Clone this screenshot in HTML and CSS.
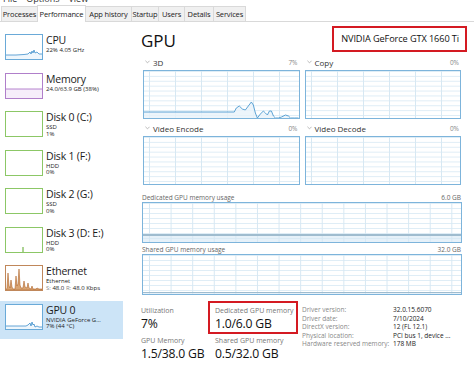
FILE: index.html
```html
<!DOCTYPE html>
<html>
<head>
<meta charset="utf-8">
<link rel="stylesheet" href="styles.css">
</head>
<body>
<div class="menubar"><span>File</span><span>Options</span><span>View</span></div>
<div class="tabs">
  <div class="tab">Processes</div>
  <div class="tab active">Performance</div>
  <div class="tab">App history</div>
  <div class="tab">Startup</div>
  <div class="tab">Users</div>
  <div class="tab">Details</div>
  <div class="tab">Services</div>
</div>
<div class="app">
  <aside class="sidebar">
    <div class="item">
      <div class="thumb t-cpu"><svg viewBox="0 0 36 24" preserveAspectRatio="none"><polygon class="fill" points="0,20 10,20 18,19.5 22,19 24,17 25,19 26,16 27,18 28,15 29,18 31,17 33,19 36,19 36,24 0,24"/><polyline points="0,20 10,20 18,19.5 22,19 24,17 25,19 26,16 27,18 28,15 29,18 31,17 33,19 36,19"/></svg></div>
      <div class="info"><div class="name">CPU</div><div class="sub">22% 4.05 GHz</div></div>
    </div>
    <div class="item">
      <div class="thumb t-mem"><svg viewBox="0 0 36 24" preserveAspectRatio="none"><rect class="fill" x="0" y="15" width="36" height="9"/><line x1="0" y1="15" x2="36" y2="15"/></svg></div>
      <div class="info"><div class="name">Memory</div><div class="sub">24.0/63.9 GB (38%)</div></div>
    </div>
    <div class="item">
      <div class="thumb t-disk"></div>
      <div class="info"><div class="name">Disk 0 (C:)</div><div class="sub">SSD</div><div class="sub">1%</div></div>
    </div>
    <div class="item">
      <div class="thumb t-disk"></div>
      <div class="info"><div class="name">Disk 1 (F:)</div><div class="sub">HDD</div><div class="sub">0%</div></div>
    </div>
    <div class="item">
      <div class="thumb t-disk"></div>
      <div class="info"><div class="name">Disk 2 (G:)</div><div class="sub">SSD</div><div class="sub">0%</div></div>
    </div>
    <div class="item">
      <div class="thumb t-disk"><svg viewBox="0 0 36 24" preserveAspectRatio="none"><line x1="17" y1="24" x2="17" y2="19"/></svg></div>
      <div class="info"><div class="name">Disk 3 (D: E:)</div><div class="sub">HDD</div><div class="sub">0%</div></div>
    </div>
    <div class="item">
      <div class="thumb t-eth"><svg viewBox="0 0 36 24" preserveAspectRatio="none"><polygon points="0,24 1,22 2,7 3,20 4,22 5,14 6,21 7,23 9,23 10,10 11,20 12,18 13,3 14,19 15,22 17,22 18,15 19,21 21,22 22,17 23,22 25,23 26,20 27,23 30,23 31,22 33,23 36,23 36,24"/></svg></div>
      <div class="info"><div class="name">Ethernet</div><div class="sub">Ethernet</div><div class="sub"><span class="dim">S:</span> 48.0 <span class="dim">R:</span> 48.0 Kbps</div></div>
    </div>
    <div class="item selected">
      <div class="thumb t-gpu"><svg viewBox="0 0 36 24" preserveAspectRatio="none"><polygon class="fill" points="0,21 20,21 22,20 24,18 25,21 26,17 27,20 28,19 29,22 31,21 33,22 36,22 36,24 0,24"/><polyline points="0,21 20,21 22,20 24,18 25,21 26,17 27,20 28,19 29,22 31,21 33,22 36,22"/></svg></div>
      <div class="info"><div class="name">GPU 0</div><div class="sub">NVIDIA GeForce G...</div><div class="sub">7% (44 °C)</div></div>
    </div>
  </aside>

  <main class="main">
    <div class="header">
      <h1 class="title">GPU</h1>
      <div class="model boxed">NVIDIA GeForce GTX 1660 Ti</div>
    </div>

    <div class="engines">
      <div class="pane">
        <div class="label"><span class="lname"><svg class="chev" viewBox="0 0 6 4"><polyline points="0.5,0.5 3,3 5.5,0.5"/></svg>3D</span><span class="pct">7%</span></div>
        <div class="graph engine"><svg viewBox="0 0 154 47" preserveAspectRatio="none"><polygon class="fill" points="0,41 90,41 92,37 95,35 98,38 101,39 104,35 107,31 109,34 111,42 113,47 116,43 119,40 121,42 123,44 125,40 127,40 129,45 131,47 134,47 137,46 141,44 144,45 146,47 150,47 154,47 154,47 0,47"/><polyline points="0,41 90,41 92,37 95,35 98,38 101,39 104,35 107,31 109,34 111,42 113,47 116,43 119,40 121,42 123,44 125,40 127,40 129,45 131,47 134,47 137,46 141,44 144,45 146,47 150,47 154,47"/></svg></div>
      </div>
      <div class="pane">
        <div class="label"><span class="lname"><svg class="chev" viewBox="0 0 6 4"><polyline points="0.5,0.5 3,3 5.5,0.5"/></svg>Copy</span><span class="pct">0%</span></div>
        <div class="graph engine"></div>
      </div>
      <div class="pane">
        <div class="label"><span class="lname"><svg class="chev" viewBox="0 0 6 4"><polyline points="0.5,0.5 3,3 5.5,0.5"/></svg>Video Encode</span><span class="pct">0%</span></div>
        <div class="graph engine"></div>
      </div>
      <div class="pane">
        <div class="label"><span class="lname"><svg class="chev" viewBox="0 0 6 4"><polyline points="0.5,0.5 3,3 5.5,0.5"/></svg>Video Decode</span><span class="pct">0%</span></div>
        <div class="graph engine"></div>
      </div>
    </div>

    <div class="mempane first">
      <div class="mlabel"><span>Dedicated GPU memory usage</span><span>6.0 GB</span></div>
      <div class="graph memory"><div class="used ded"></div></div>
    </div>
    <div class="mempane">
      <div class="mlabel"><span>Shared GPU memory usage</span><span>32.0 GB</span></div>
      <div class="graph memory"><div class="used sh"></div></div>
    </div>

    <div class="stats">
      <div class="stat c1"><div class="slabel">Utilization</div><div class="svalue">7%</div></div>
      <div class="stat c2 boxed"><div class="slabel">Dedicated GPU memory</div><div class="svalue">1.0/6.0 GB</div></div>
      <div class="stat c1"><div class="slabel">GPU Memory</div><div class="svalue">1.5/38.0 GB</div></div>
      <div class="stat c2"><div class="slabel">Shared GPU memory</div><div class="svalue">0.5/32.0 GB</div></div>
      <dl class="details">
        <dt>Driver version:</dt><dd>32.0.15.6070</dd>
        <dt>Driver date:</dt><dd>7/10/2024</dd>
        <dt>DirectX version:</dt><dd>12 (FL 12.1)</dd>
        <dt>Physical location:</dt><dd>PCI bus 1, device ...</dd>
        <dt>Hardware reserved memory:</dt><dd>178 MB</dd>
      </dl>
    </div>
  </main>
</div>
</body>
</html>
```

FILE: styles.css
```css
* { box-sizing: border-box; }
html, body { margin: 0; padding: 0; }
body {
  width: 474px;
  height: 366px;
  overflow: hidden;
  background: #fff;
  font-family: "Open Sans", "Noto Sans", sans-serif;
  color: #1b1b1b;
}

.menubar {
  height: 5px;
  overflow: hidden;
  display: flex;
  gap: 9px;
  padding-left: 3px;
  font-size: 9px;
  color: #333;
}
.menubar span { line-height: 9px; margin-top: -6px; }

.tabs {
  height: 17px;
  display: flex;
  align-items: flex-end;
  padding-left: 1px;
  border-bottom: 1px solid #d9d9d9;
}
.tab {
  height: 15px;
  padding: 0;
  text-align: center;
  font-size: 7.5px;
  line-height: 14px;
  letter-spacing: -0.15px;
  color: #222;
  background: #f0f0f0;
  border: 1px solid #d9d9d9;
  border-bottom: none;
  margin-right: -1px;
  white-space: nowrap;
}
.tab:nth-child(1) { width: 37px; }
.tab:nth-child(2) { width: 49px; }
.tab:nth-child(3) { width: 47px; }
.tab:nth-child(4) { width: 28px; }
.tab:nth-child(5) { width: 27px; }
.tab:nth-child(6) { width: 30px; }
.tab:nth-child(7) { width: 33px; }
.tab.active {
  height: 17px;
  line-height: 16px;
  background: #fff;
  margin-bottom: -1px;
  position: relative;
  z-index: 1;
}

.app {
  display: flex;
  height: 344px;
}

.sidebar {
  width: 125px;
  flex: none;
  padding-top: 9px;
}
.item {
  height: 38.5px;
  display: flex;
  align-items: flex-start;
  padding: 3px 0 0 5px;
  width: 123px;
}
.item.selected { background: #cce4f7; }
.thumb {
  width: 38px;
  height: 26px;
  flex: none;
  border: 1px solid #6aaad8;
  background: #fff;
}
.thumb svg { display: block; width: 36px; height: 24px; }
.t-cpu polyline, .t-gpu polyline { fill: none; stroke: #3f8fcc; stroke-width: 0.8; }
.t-cpu .fill, .t-gpu .fill { fill: #eef6fc; }
.t-mem { border-color: #b07fca; }
.t-mem line { stroke: #a565c3; stroke-width: 0.8; }
.t-mem .fill { fill: #f6eefa; }
.t-disk { border-color: #8cc766; }
.t-disk line { stroke: #5ba726; stroke-width: 1; }
.t-eth { border-color: #c0875a; }
.t-eth polygon { fill: #d9a472; stroke: #b0642a; stroke-width: 0.6; }

.info { margin-left: 3px; padding-top: 0; }
.name {
  font-size: 10.5px;
  line-height: 13px;
  letter-spacing: -0.2px;
  color: #1b1b1b;
}
.sub {
  font-size: 6px;
  line-height: 6.5px;
  color: #222;
  white-space: nowrap;
}
.dim { color: #888; }

.main {
  flex: 1;
  padding: 0 13px 0 18px;
}
.header {
  height: 34px;
  display: flex;
  justify-content: space-between;
  align-items: center;
  margin-right: -6px;
}
.title {
  margin: 0 0 0 -2px;
  font-size: 17px;
  font-weight: 400;
  line-height: 20px;
  color: #111;
  padding-top: 3px;
}
.boxed { border: 2px solid #d41a22; }
.model {
  font-size: 9.2px;
  line-height: 12px;
  letter-spacing: -0.1px;
  padding: 5px 6px 5px 7px;
  color: #111;
  margin-top: 0;
}

.engines {
  display: grid;
  grid-template-columns: 1fr 1fr;
  column-gap: 5px;
  row-gap: 3px;
}
.label, .mlabel {
  display: flex;
  justify-content: space-between;
  align-items: center;
  color: #555;
}
.label {
  height: 12px;
  margin-bottom: 2px;
  font-size: 8px;
  color: #333;
}
.lname { display: flex; align-items: center; }
.chev { width: 5px; height: 4px; margin: 0 3px 0 2px; }
.chev polyline { fill: none; stroke: #999; stroke-width: 0.8; }
.pct { font-size: 6.5px; color: #888; padding-right: 2px; }

.graph {
  border: 1px solid #7db4db;
  background-color: #fff;
  background-image:
    linear-gradient(to right, #d7e8f3 1px, transparent 1px),
    linear-gradient(to bottom, #dfedf6 1px, transparent 1px);
  position: relative;
}
.graph.engine {
  height: 49px;
  background-size: 26px 100%, 100% 4.9px;
  background-position: 5px 0, 0 0;
}
.graph.engine svg { display: block; width: 100%; height: 100%; }
.graph.engine polyline { fill: none; stroke: #4c9ad0; stroke-width: 0.9; }
.graph.engine .fill { fill: #e8f2fa; opacity: 0.8; }

.mempane { margin-left: -1px; margin-right: -1px; }
.mempane.first { margin-top: 7px; }
.mlabel {
  height: 10px;
  font-size: 6.5px;
  color: #666;
}
.mlabel span:last-child { padding-right: 1px; }
.graph.memory {
  height: 41px;
  margin-bottom: 1px;
  background-size: 21.6px 100%, 100% 5px;
  background-position: 6px 0, 0 0;
  display: flex;
  align-items: flex-end;
}
.used { width: 100%; background: rgba(214, 232, 245, 0.6); border-top: 2px solid #9fbccf; }
.used.ded { height: 8px; }
.used.sh { height: 2px; border-top-width: 1px; }

.stats {
  margin-top: 11px;
  margin-left: -2px;
  display: grid;
  grid-template-columns: 74px 87px 1fr;
  grid-template-rows: 30px 30px;
}
.stat { padding-top: 0; }
.stat.c1 { grid-column: 1; }
.stat.c2 { grid-column: 2; }
.stat.boxed {
  margin: -5px 4px 2px -7px;
  padding: 3px 0 0 5px;
}
.slabel { font-size: 7px; line-height: 10px; color: #777; white-space: nowrap; }
.svalue { font-size: 12.2px; line-height: 16px; color: #111; white-space: nowrap; letter-spacing: -0.2px; }

.details {
  grid-column: 3;
  grid-row: 1 / span 2;
  margin: 0;
  display: grid;
  grid-template-columns: 91px 1fr;
  align-content: start;
  font-size: 6.5px;
  line-height: 8.5px;
  white-space: nowrap;
}
.details dt { color: #888; }
.details dd { margin: 0; color: #222; }
```
